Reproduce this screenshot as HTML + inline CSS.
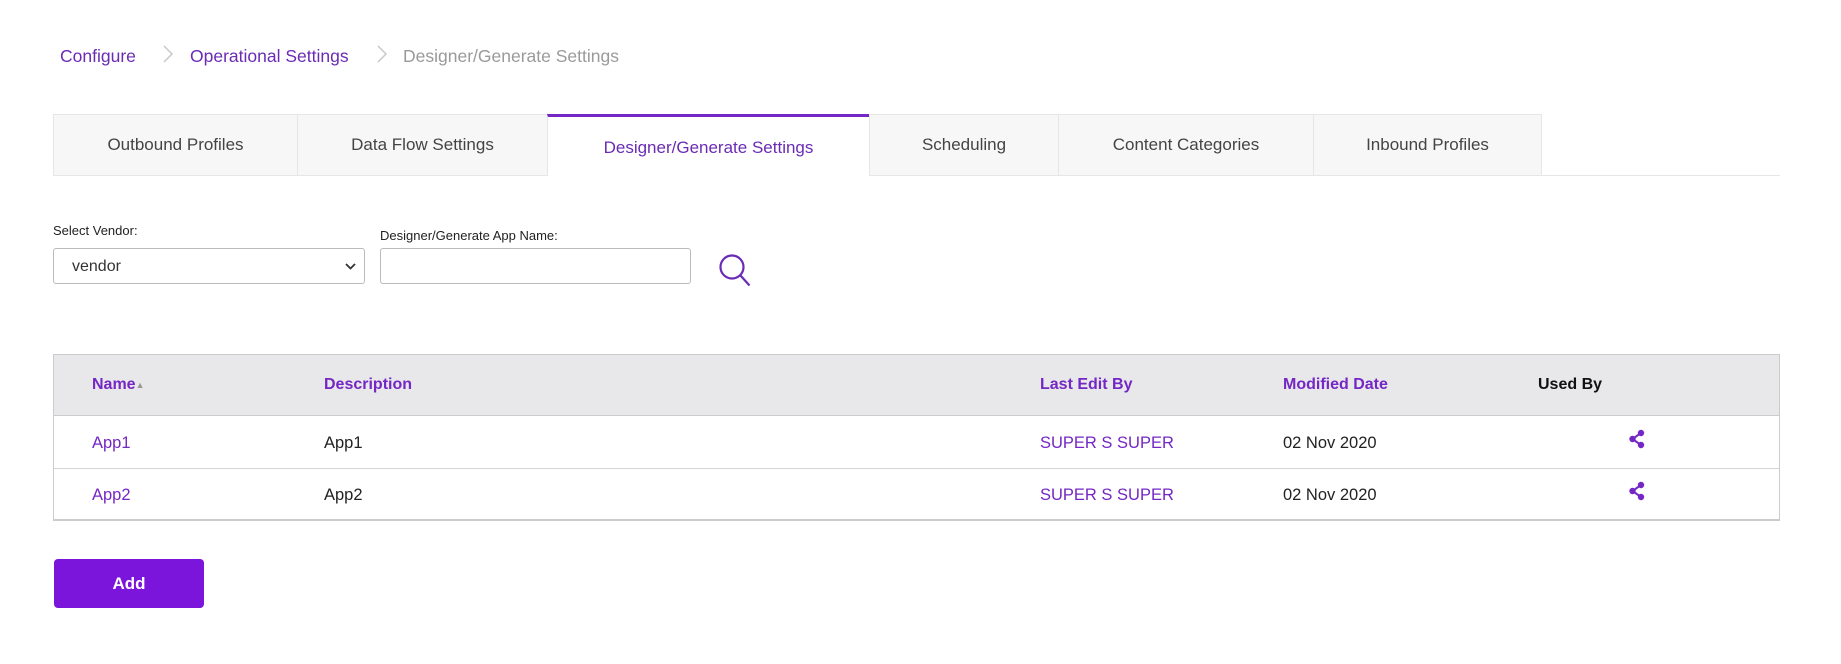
<!DOCTYPE html>
<html><head><meta charset="utf-8"><style>
*{margin:0;padding:0;box-sizing:border-box}
body{width:1841px;height:664px;background:#fff;font-family:"Liberation Sans",Arial,sans-serif;position:relative;overflow:hidden}
.a{position:absolute;white-space:nowrap}
.bc{font-size:17.5px;top:46px;color:#6a2bb5}
.chev{top:44px;width:12px;height:20px}
.tab{position:absolute;top:114px;height:61px;background:#f7f7f7;border:1px solid #e6e6e6;border-bottom:none;font-size:17px;color:#444;text-align:center;line-height:60px}
.lbl{font-size:13px;color:#222}
.th{font-size:16px;font-weight:bold;color:#7427c4}
.td{font-size:16.5px;color:#222}
.p{color:#7427c4}
</style></head><body>
<div class="a bc" style="left:60px">Configure</div>
<svg class="a chev" style="left:162px" viewBox="0 0 12 20"><path d="M2 2l8 8-8 8" fill="none" stroke="#c8c8c8" stroke-width="1.5"/></svg>
<div class="a bc" style="left:190px">Operational Settings</div>
<svg class="a chev" style="left:376px" viewBox="0 0 12 20"><path d="M2 2l8 8-8 8" fill="none" stroke="#c8c8c8" stroke-width="1.5"/></svg>
<div class="a bc" style="left:403px;color:#9a9a9a">Designer/Generate Settings</div>

<div class="a" style="left:53px;top:175px;width:1727px;height:1px;background:#e6e6e6"></div>
<div class="tab" style="left:53px;width:245px">Outbound Profiles</div>
<div class="tab" style="left:297px;width:251px">Data Flow Settings</div>
<div class="tab" style="left:547px;width:323px;background:#fff;border-top:3px solid #7427c4;color:#6a2bb5;line-height:62px;height:62px">Designer/Generate Settings</div>
<div class="tab" style="left:869px;width:190px">Scheduling</div>
<div class="tab" style="left:1058px;width:256px">Content Categories</div>
<div class="tab" style="left:1313px;width:229px">Inbound Profiles</div>

<div class="a lbl" style="left:53px;top:223px">Select Vendor:</div>
<div class="a lbl" style="left:380px;top:228px">Designer/Generate App Name:</div>
<div class="a" style="left:53px;top:248px;width:312px;height:36px;border:1px solid #bbb;border-radius:3px;font-size:16px;color:#333;padding:9px 0 0 18px">vendor
<svg style="position:absolute;right:8px;top:14px" width="11" height="8" viewBox="0 0 11 8"><path d="M1 1l4.5 4.5L10 1" fill="none" stroke="#333" stroke-width="1.8"/></svg></div>
<div class="a" style="left:380px;top:248px;width:311px;height:36px;border:1px solid #bbb;border-radius:3px"></div>
<svg class="a" style="left:718px;top:252px" width="40" height="38" viewBox="0 0 40 38"><circle cx="14" cy="15" r="11.5" fill="none" stroke="#6a2bb5" stroke-width="2.2"/><path d="M22.5 23.5l9 10" stroke="#6a2bb5" stroke-width="2.2"/></svg>

<div class="a" style="left:53px;top:354px;width:1727px;height:167px;border:1px solid #ccc;border-bottom:2px solid #ccc"></div>
<div class="a" style="left:54px;top:355px;width:1725px;height:61px;background:#e8e8eb;border-bottom:1px solid #ccc"></div>
<div class="a" style="left:54px;top:468px;width:1725px;height:1px;background:#d4d4d4"></div>
<div class="a th" style="left:92px;top:376px">Name<span style="color:#999;font-size:9px;vertical-align:1px">▲</span></div>
<div class="a th" style="left:324px;top:376px">Description</div>
<div class="a th" style="left:1040px;top:376px">Last Edit By</div>
<div class="a th" style="left:1283px;top:376px">Modified Date</div>
<div class="a th" style="left:1538px;top:376px;color:#111">Used By</div>

<div class="a td p" style="left:92px;top:434px">App1</div>
<div class="a td" style="left:324px;top:434px">App1</div>
<div class="a td p" style="left:1040px;top:434px">SUPER S SUPER</div>
<div class="a td" style="left:1283px;top:434px">02 Nov 2020</div>
<div class="a td p" style="left:92px;top:486px">App2</div>
<div class="a td" style="left:324px;top:486px">App2</div>
<div class="a td p" style="left:1040px;top:486px">SUPER S SUPER</div>
<div class="a td" style="left:1283px;top:486px">02 Nov 2020</div>

<svg class="a" style="left:1628px;top:429px" width="18" height="20" viewBox="0 0 18 20"><g fill="#7427c4"><circle cx="13" cy="4" r="3.2"/><circle cx="4.5" cy="10" r="3.2"/><circle cx="13" cy="16" r="3.2"/></g><path d="M13 4L4.5 10 13 16" fill="none" stroke="#7427c4" stroke-width="2"/></svg>
<svg class="a" style="left:1628px;top:481px" width="18" height="20" viewBox="0 0 18 20"><g fill="#7427c4"><circle cx="13" cy="4" r="3.2"/><circle cx="4.5" cy="10" r="3.2"/><circle cx="13" cy="16" r="3.2"/></g><path d="M13 4L4.5 10 13 16" fill="none" stroke="#7427c4" stroke-width="2"/></svg>

<div class="a" style="left:54px;top:559px;width:150px;height:49px;background:#7b15dc;border-radius:4px;color:#fff;font-size:17px;font-weight:bold;text-align:center;line-height:49px">Add</div>
</body></html>
